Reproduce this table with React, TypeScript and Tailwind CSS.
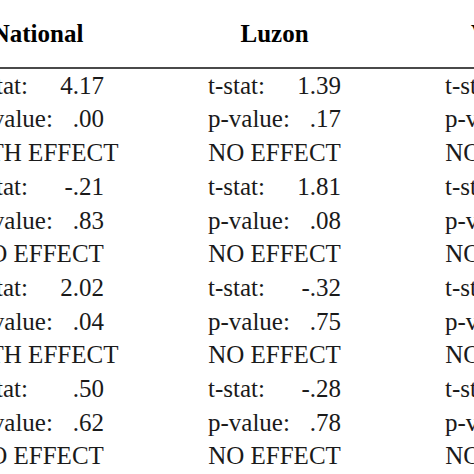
type Cell = { t: string; p: string; effect: string };

const regions = ['National', 'Luzon', 'Visayas'];

// one entry per test, one cell per region
const tests: Cell[][] = [
  [
    { t: '4.17', p: '.00', effect: 'WITH EFFECT' },
    { t: '1.39', p: '.17', effect: 'NO EFFECT' },
    { t: '1.12', p: '.27', effect: 'NO EFFECT' },
  ],
  [
    { t: '-.21', p: '.83', effect: 'NO EFFECT' },
    { t: '1.81', p: '.08', effect: 'NO EFFECT' },
    { t: '.95', p: '.34', effect: 'NO EFFECT' },
  ],
  [
    { t: '2.02', p: '.04', effect: 'WITH EFFECT' },
    { t: '-.32', p: '.75', effect: 'NO EFFECT' },
    { t: '1.44', p: '.15', effect: 'NO EFFECT' },
  ],
  [
    { t: '.50', p: '.62', effect: 'NO EFFECT' },
    { t: '-.28', p: '.78', effect: 'NO EFFECT' },
    { t: '.61', p: '.54', effect: 'NO EFFECT' },
  ],
];

function Stat({ label, value }: { label: string; value: string }) {
  return (
    <div className="flex w-[133px] justify-between whitespace-nowrap">
      <span>{label}</span>
      <span>{value}</span>
    </div>
  );
}

export default function App() {
  return (
    <div className="h-[474px] w-[474px] overflow-hidden bg-white font-['Liberation_Serif','Times_New_Roman',serif] text-[25px] leading-[33.7px] text-[#1a1a1a]">
      <div className="w-[760px]">
        {/* header */}
        <div className="ml-[-29px] flex pt-[17px] pb-[16px] font-bold text-black">
          {regions.map((r) => (
            <div key={r} className="w-[237px] shrink-0">
              <div className="flex w-[133px] justify-center whitespace-nowrap">{r}</div>
            </div>
          ))}
        </div>
        <div className="h-[2px] bg-[#4a4a4a]" />

        {/* body */}
        <div className="ml-[-29px]">
          {tests.map((row, i) => (
            <div key={i}>
              <div className="flex">
                {row.map((c, j) => (
                  <div key={j} className="w-[237px] shrink-0">
                    <Stat label="t-stat:" value={c.t} />
                  </div>
                ))}
              </div>
              <div className="flex">
                {row.map((c, j) => (
                  <div key={j} className="w-[237px] shrink-0">
                    <Stat label="p-value:" value={c.p} />
                  </div>
                ))}
              </div>
              <div className="flex">
                {row.map((c, j) => (
                  <div key={j} className="w-[237px] shrink-0">
                    <div className="flex w-[133px] justify-center whitespace-nowrap">{c.effect}</div>
                  </div>
                ))}
              </div>
            </div>
          ))}
        </div>
      </div>
    </div>
  );
}
